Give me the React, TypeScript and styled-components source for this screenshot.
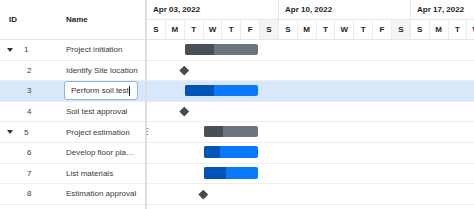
import styled, { createGlobalStyle } from "styled-components";

const GlobalStyle = createGlobalStyle`
  html, body {
    margin: 0;
    padding: 0;
    background: #fff;
  }
  body {
    font-family: "Liberation Sans", Arial, sans-serif;
    color: #333;
  }
`;

const ROW_H = 20.6;
const DAY_W = 132 / 7;

type Task = {
  id: number;
  name: string;
  parent?: boolean;
  kind: "bar" | "milestone";
  start: number; // px from chart start
  width?: number;
  progress?: number;
  tone?: "gray" | "blue";
  editing?: boolean;
};

const tasks: Task[] = [
  { id: 1, name: "Project initiation", parent: true, kind: "bar", start: 38, width: 73.3, progress: 29.3, tone: "gray" },
  { id: 2, name: "Identify Site location", kind: "milestone", start: 37.7 },
  { id: 3, name: "Perform soil test", kind: "bar", start: 38, width: 73.3, progress: 29.3, tone: "blue", editing: true },
  { id: 4, name: "Soil test approval", kind: "milestone", start: 37.7 },
  { id: 5, name: "Project estimation", parent: true, kind: "bar", start: 56.6, width: 54.7, progress: 19.5, tone: "gray" },
  { id: 6, name: "Develop floor plan for estimation", kind: "bar", start: 56.6, width: 54.7, progress: 16.5, tone: "blue" },
  { id: 7, name: "List materials", kind: "bar", start: 56.6, width: 54.7, progress: 22.5, tone: "blue" },
  { id: 8, name: "Estimation approval", kind: "milestone", start: 56.5 },
];

const weeks = ["Apr 03, 2022", "Apr 10, 2022", "Apr 17, 2022"];
const dayLetters = ["S", "M", "T", "W", "T", "F", "S"];

const Gantt = styled.div`
  display: flex;
  width: 474px;
  height: 209px;
  overflow: hidden;
  position: relative;
`;

const GridPane = styled.div`
  width: 145px;
  flex: none;
  display: flex;
  flex-direction: column;
`;

const Splitter = styled.div`
  width: 2px;
  flex: none;
  background: #dedede;
  position: relative;
`;

const SplitterDots = styled.span`
  position: absolute;
  left: -2px;
  top: 128px;
  font-size: 9px;
  line-height: 8px;
  color: #555;
`;

const ChartPane = styled.div`
  flex: 1;
  min-width: 0;
  display: flex;
  flex-direction: column;
  overflow: hidden;
`;

const GridHeader = styled.div`
  height: 40px;
  display: flex;
  align-items: center;
  border-bottom: 1px solid #e6e6e6;
  box-sizing: border-box;
  font-weight: bold;
  font-size: 8px;
  color: #212529;
`;

const IdHead = styled.div`
  width: 57px;
  padding-left: 9px;
  box-sizing: border-box;
`;

const NameHead = styled.div`
  padding-left: 9px;
`;

const Row = styled.div<{ $selected?: boolean }>`
  height: ${ROW_H}px;
  display: flex;
  align-items: center;
  border-bottom: 1px solid #eeeeee;
  box-sizing: border-box;
  background: ${(p) => (p.$selected ? "#d8e8fc" : "transparent")};
  font-size: 8px;
  color: #3a3a3a;
  position: relative;
`;

const IdCell = styled.div<{ $parent?: boolean }>`
  width: 57px;
  box-sizing: border-box;
  display: flex;
  align-items: center;
  padding-left: ${(p) => (p.$parent ? "7px" : "27px")};
`;

const Caret = styled.span`
  display: inline-block;
  width: 0;
  height: 0;
  border-left: 3px solid transparent;
  border-right: 3px solid transparent;
  border-top: 4px solid #333;
  margin-right: 11px;
`;

const NameCell = styled.div`
  flex: 1;
  min-width: 0;
  padding-left: 9px;
  padding-right: 7px;
  white-space: nowrap;
  overflow: hidden;
  text-overflow: ellipsis;
`;

const EditBox = styled.div`
  margin-left: -2px;
  height: 19px;
  width: 74px;
  box-sizing: border-box;
  background: #fff;
  border: 1px solid #8ab4ea;
  border-radius: 3px;
  display: flex;
  align-items: center;
  padding-left: 6px;
  font-size: 8px;
  color: #333;
  white-space: nowrap;
`;

const TextCaret = styled.span`
  display: inline-block;
  width: 1px;
  height: 10px;
  background: #222;
`;

const WeekRow = styled.div`
  height: 20px;
  display: flex;
  border-bottom: 1px solid #e6e6e6;
  box-sizing: border-box;
`;

const WeekCell = styled.div`
  width: 132px;
  flex: none;
  box-sizing: border-box;
  border-right: 1px solid #e6e6e6;
  padding-left: 6px;
  display: flex;
  align-items: center;
  font-size: 8px;
  font-weight: bold;
  color: #212529;
  white-space: nowrap;
`;

const DayRow = styled.div`
  height: 20px;
  display: flex;
  border-bottom: 1px solid #e6e6e6;
  box-sizing: border-box;
`;

const DayCell = styled.div<{ $weekend?: boolean }>`
  width: ${DAY_W}px;
  flex: none;
  box-sizing: border-box;
  border-right: 1px solid #ececec;
  background: ${(p) => (p.$weekend ? "#f3f4f5" : "#fff")};
  display: flex;
  align-items: center;
  justify-content: center;
  font-size: 8px;
  font-weight: bold;
  color: #212529;
`;

const Bar = styled.div<{ $tone: "gray" | "blue" }>`
  position: absolute;
  top: 3.5px;
  height: 11.5px;
  border-radius: 2px;
  overflow: hidden;
  background: ${(p) => (p.$tone === "gray" ? "#6c757d" : "#0a78fb")};
`;

const Progress = styled.div<{ $tone: "gray" | "blue" }>`
  height: 100%;
  background: ${(p) => (p.$tone === "gray" ? "#484f57" : "#0055b6")};
`;

const Milestone = styled.div`
  position: absolute;
  top: 6.5px;
  width: 6.5px;
  height: 6.5px;
  margin-left: -3.25px;
  background: #454b52;
  transform: rotate(45deg);
`;

export default function App() {
  const days: { letter: string; weekend: boolean }[] = [];
  weeks.forEach(() =>
    dayLetters.forEach((l, i) => days.push({ letter: l, weekend: i === 6 }))
  );

  return (
    <>
      <GlobalStyle />
      <Gantt>
        <GridPane>
          <GridHeader>
            <IdHead>ID</IdHead>
            <NameHead>Name</NameHead>
          </GridHeader>
          {tasks.map((t) => (
            <Row key={t.id} $selected={t.editing}>
              <IdCell $parent={t.parent}>
                {t.parent && <Caret />}
                {t.id}
              </IdCell>
              {t.editing ? (
                <NameCell>
                  <EditBox>
                    {t.name}
                    <TextCaret />
                  </EditBox>
                </NameCell>
              ) : (
                <NameCell>{t.name}</NameCell>
              )}
            </Row>
          ))}
        </GridPane>
        <Splitter>
          <SplitterDots>⋮</SplitterDots>
        </Splitter>
        <ChartPane>
          <WeekRow>
            {weeks.map((w) => (
              <WeekCell key={w}>{w}</WeekCell>
            ))}
          </WeekRow>
          <DayRow>
            {days.map((d, i) => (
              <DayCell key={i} $weekend={d.weekend}>
                {d.letter}
              </DayCell>
            ))}
          </DayRow>
          {tasks.map((t) => (
            <Row key={t.id} $selected={t.editing}>
              {t.kind === "bar" && t.tone ? (
                <Bar $tone={t.tone} style={{ left: t.start, width: t.width }}>
                  <Progress $tone={t.tone} style={{ width: t.progress }} />
                </Bar>
              ) : (
                <Milestone style={{ left: t.start }} />
              )}
            </Row>
          ))}
        </ChartPane>
      </Gantt>
    </>
  );
}
